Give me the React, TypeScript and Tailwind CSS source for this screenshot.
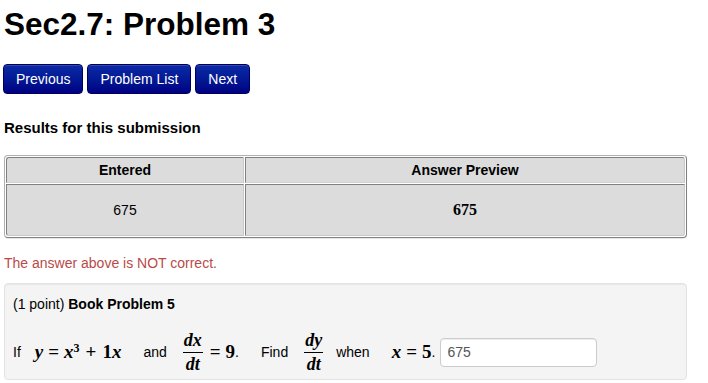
import React from 'react';

const serif = { fontFamily: '"Liberation Serif", "DejaVu Serif", serif' };

const Frac: React.FC<{ num: string }> = ({ num }) => (
  <span className="inline-flex flex-col items-center font-bold italic text-[18px] leading-[17px]" style={serif}>
    <span className="px-[1px]">{num}</span>
    <span className="w-full h-[1px] bg-black my-[3px]" />
    <span className="px-[1px]">dt</span>
  </span>
);

const Eq: React.FC = () => <span className="mx-[5px] not-italic">=</span>;

const NavButton: React.FC<{ label: string }> = ({ label }) => (
  <button className="h-[30px] px-[12px] rounded-[4px] border border-[#00005c] bg-gradient-to-b from-[#0d2aa6] to-[#000083] text-white text-[14px] leading-none shadow-[inset_0_1px_0_rgba(255,255,255,0.15)]">
    {label}
  </button>
);

export default function App() {
  return (
    <div className="px-[4px] text-[14px] text-black bg-white min-h-[383px]" style={{ fontFamily: '"Liberation Sans", Arial, sans-serif' }}>
      <h2 className="pt-[5px] text-[31.5px] leading-[38px] font-bold">Sec2.7: Problem 3</h2>

      {/* Navigation */}
      <div className="flex gap-[4px] mt-[21px] -ml-[1px]">
        <NavButton label="Previous" />
        <NavButton label="Problem List" />
        <NavButton label="Next" />
      </div>

      {/* Results */}
      <h3 className="mt-[24px] text-[15px] leading-[20px] font-bold">Results for this submission</h3>

      <div className="mt-[17px] w-[683px] rounded-[4px] border border-[#b0b0b0] border-r-[#808080] border-b-[#808080] p-[1px] shadow-[0_1px_1px_rgba(0,0,0,0.1)]">
        <div className="grid grid-cols-[238px_1fr] gap-[1px]">
          <div className="h-[26px] flex items-center justify-center bg-[#dcdcdc] border border-[#808080] border-b-[#d0d0d0] border-r-[#c8c8c8] rounded-tl-[3px] font-bold">
            Entered
          </div>
          <div className="h-[26px] flex items-center justify-center bg-[#dcdcdc] border border-[#808080] border-b-[#d0d0d0] border-r-[#c8c8c8] rounded-tr-[3px] font-bold">
            Answer Preview
          </div>
          <div className="h-[52px] flex items-center justify-center bg-[#dcdcdc] border border-[#808080] border-b-[#c8c8c8] border-r-[#c8c8c8] rounded-bl-[3px]">
            675
          </div>
          <div className="h-[52px] flex items-center justify-center bg-[#dcdcdc] border border-[#808080] border-b-[#c8c8c8] border-r-[#c8c8c8] rounded-br-[3px]">
            <span className="font-bold text-[16px]" style={serif}>675</span>
          </div>
        </div>
      </div>

      <p className="mt-[15px] text-[#b94a48] leading-[20px]">The answer above is NOT correct.</p>

      {/* Problem */}
      <div className="mt-[10px] w-[683px] h-[97px] bg-[#f4f4f4] border border-[#e3e3e3] rounded-[4px] px-[8px] pt-[10px] shadow-[inset_0_1px_1px_rgba(0,0,0,0.05)]">
        <p className="leading-[20px]">
          (1 point) <span className="font-bold">Book Problem 5</span>
        </p>
        <div className="flex items-center mt-[16px] h-[44px]">
          <span>If</span>
          <span className="ml-[14px] font-bold italic text-[19px] whitespace-nowrap" style={serif}>
            y<Eq />x<sup className="text-[12px] not-italic">3</sup>
            <span className="mx-[6px] not-italic">+</span>
            <span className="not-italic">1</span>x
          </span>
          <span className="ml-[22px]">and</span>
          <span className="ml-[16px]"><Frac num="dx" /></span>
          <span className="ml-[2px] font-bold text-[19px]" style={serif}><Eq />9</span>
          <span>.</span>
          <span className="ml-[22px]">Find</span>
          <span className="ml-[16px]"><Frac num="dy" /></span>
          <span className="ml-[13px]">when</span>
          <span className="ml-[22px] font-bold text-[19px] whitespace-nowrap" style={serif}>
            <span className="italic">x</span><Eq />5
          </span>
          <span>.</span>
          <input
            readOnly
            value="675"
            className="ml-[5px] w-[157px] h-[29px] border border-[#cccccc] rounded-[4px] bg-white px-[6px] text-[14px] text-[#555555] shadow-[inset_0_1px_1px_rgba(0,0,0,0.075)] outline-none"
            style={{ fontFamily: '"Liberation Sans", Arial, sans-serif' }}
          />
        </div>
      </div>
    </div>
  );
}
